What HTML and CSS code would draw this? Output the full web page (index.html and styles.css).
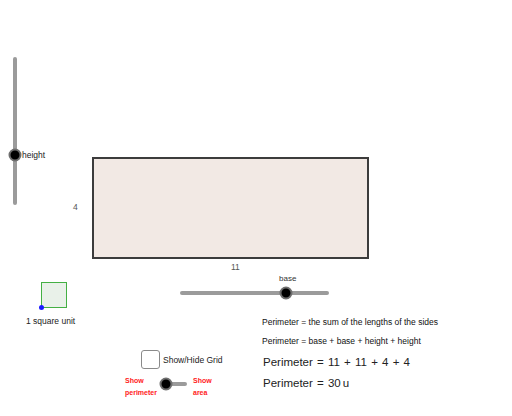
FILE: index.html
```html
<!DOCTYPE html>
<html>
<head>
<meta charset="utf-8">
<link rel="stylesheet" href="styles.css">
</head>
<body>
<div class="applet">
  <div class="vslider"><div class="track"></div></div>
  <div class="knob knob-height"></div>
  <div class="label lbl-height">height</div>

  <div class="rect"></div>
  <div class="label lbl-4">4</div>
  <div class="label lbl-11">11</div>

  <div class="label lbl-base">base</div>
  <div class="hslider base-track"></div>
  <div class="knob knob-base"></div>

  <div class="unit-square"></div>
  <div class="unit-dot"></div>
  <div class="label lbl-unit">1 square unit</div>

  <div class="formulas">
    <div class="f f-def">Perimeter = the sum of the lengths of the sides</div>
    <div class="f f-words">Perimeter = base + base + height + height</div>
    <div class="f f-math">Perimeter <span class="op">=</span> 11 <span class="op">+</span> 11 <span class="op">+</span> 4 <span class="op">+</span> 4</div>
    <div class="f f-math f-total">Perimeter <span class="op">=</span> 30<span class="u">u</span></div>
  </div>

  <div class="checkbox"></div>
  <div class="label lbl-grid">Show/Hide Grid</div>

  <div class="toggle-text tt-left">Show<br>perimeter</div>
  <div class="hslider toggle-track"></div>
  <div class="knob knob-toggle"></div>
  <div class="toggle-text tt-right">Show<br>area</div>
</div>
</body>
</html>
```
FILE: styles.css
```css
html, body {
  margin: 0;
  padding: 0;
  background: #fff;
}
.applet {
  position: relative;
  width: 512px;
  height: 416px;
  overflow: hidden;
  font-family: "Liberation Sans", Arial, sans-serif;
  color: #222;
}
.label {
  position: absolute;
  font-size: 8px;
  line-height: 10px;
  white-space: nowrap;
}
.vslider {
  position: absolute;
  left: 13px;
  top: 57px;
  width: 4px;
  height: 148px;
}
.vslider .track {
  width: 100%;
  height: 100%;
  background: #9b9b9b;
  border-radius: 2px;
}
.hslider {
  position: absolute;
  height: 4px;
  background: #9b9b9b;
  border-radius: 2px;
}
.knob {
  position: absolute;
  width: 9px;
  height: 9px;
  border-radius: 50%;
  background: #000;
  border: 2px solid #6e6e6e;
  transform: translate(-50%, -50%);
}
.knob-height { left: 15px; top: 155px; }
.lbl-height { left: 22px; top: 150px; font-size: 8.5px; }

.rect {
  position: absolute;
  left: 92px;
  top: 157px;
  width: 273px;
  height: 98px;
  border: 2px solid #3c3c3c;
  background: #f2e9e4;
}
.lbl-4 { left: 73px; top: 202px; color: #555; font-size: 8.5px; }
.lbl-11 { left: 231px; top: 262px; color: #555; font-size: 8.5px; }

.lbl-base { left: 279px; top: 274px; color: #333; }
.base-track { left: 180px; top: 291px; width: 149px; }
.knob-base { left: 286px; top: 293px; }

.unit-square {
  position: absolute;
  left: 41px;
  top: 282px;
  width: 24px;
  height: 24px;
  border: 1.5px solid #44b044;
  background: #e9f1e9;
}
.unit-dot {
  position: absolute;
  left: 39px;
  top: 305px;
  width: 5px;
  height: 5px;
  border-radius: 50%;
  background: #1a1aff;
}
.lbl-unit { left: 26px; top: 316px; font-size: 8.5px; }

.formulas {
  position: absolute;
  left: 262px;
  top: 316px;
  display: flex;
  flex-direction: column;
}
.f {
  white-space: nowrap;
  color: #111;
}
.f-def { font-size: 8.5px; line-height: 12px; }
.f-words { font-size: 8.5px; line-height: 12px; margin-top: 7px; }
.f-math {
  font-size: 11.5px;
  line-height: 14px;
  margin-top: 8px;
  padding-left: 1px;
  color: #222;
}
.f-total { margin-top: 7px; }
.op { margin: 0 1px; }
.u { margin-left: 2px; }

.checkbox {
  position: absolute;
  left: 141px;
  top: 350px;
  width: 17px;
  height: 17px;
  border: 1px solid #8a8a8a;
  border-radius: 3px;
  background: #fff;
}
.lbl-grid { left: 163px; top: 355px; font-size: 8.5px; }

.toggle-text {
  position: absolute;
  font-size: 7px;
  line-height: 12px;
  font-weight: bold;
  color: #ff1a1a;
}
.tt-left { left: 125px; top: 375px; }
.tt-right { left: 193px; top: 375px; }
.toggle-track { left: 166px; top: 382px; width: 21px; }
.knob-toggle { left: 166px; top: 384px; }
```
